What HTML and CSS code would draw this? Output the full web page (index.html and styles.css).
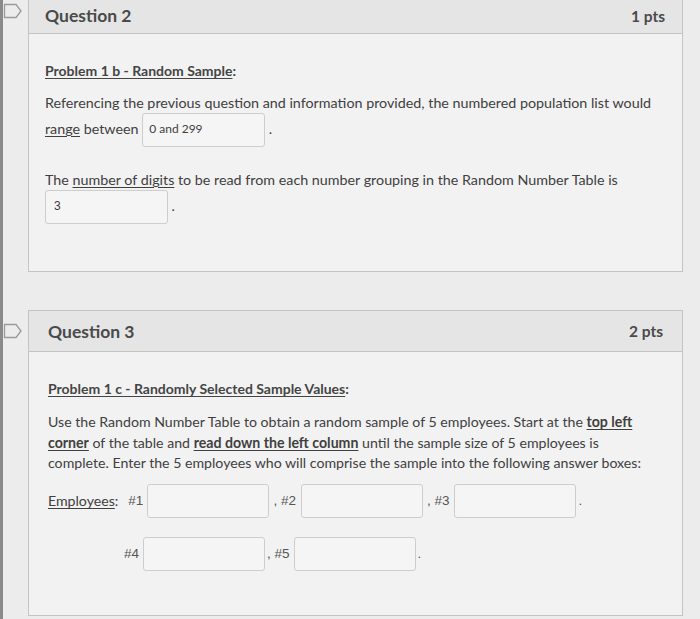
FILE: index.html
```html
<!DOCTYPE html>
<html>
<head>
<meta charset="utf-8">
<link rel="stylesheet" href="styles.css">
</head>
<body>
<div class="page">
  <div class="question q2">
    <div class="flag-col">
      <svg class="flag" width="20" height="16" viewBox="0 0 20 16"><path d="M1.5 1.5 H13 L18 8 L13 14.5 H1.5 Z" fill="none" stroke="#9a9a9a" stroke-width="1.3"/></svg>
    </div>
    <div class="card">
      <div class="card-head">
        <span class="q-title">Question 2</span>
        <span class="pts">1 pts</span>
      </div>
      <div class="card-body">
        <p class="prob"><u>Problem 1 b - Random Sample</u>:</p>
        <p class="para">Referencing the previous question and information provided, the numbered population list would<br><u>range</u> between <span class="inp wide">0 and 299</span> .</p>
        <p class="para digits">The <u>number of digits</u> to be read from each number grouping in the Random Number Table is</p>
        <p class="inp-line"><span class="inp wide num">3</span> .</p>
      </div>
    </div>
  </div>

  <div class="question q3">
    <div class="flag-col">
      <svg class="flag" width="20" height="16" viewBox="0 0 20 16"><path d="M1.5 1.5 H13 L18 8 L13 14.5 H1.5 Z" fill="none" stroke="#9a9a9a" stroke-width="1.3"/></svg>
    </div>
    <div class="card">
      <div class="card-head">
        <span class="q-title">Question 3</span>
        <span class="pts">2 pts</span>
      </div>
      <div class="card-body">
        <p class="prob"><u>Problem 1 c - Randomly Selected Sample Values</u>:</p>
        <p class="para tight">Use the Random Number Table to obtain a random sample of 5 employees. Start at the <b><u>top left</u></b><br><b><u>corner</u></b> of the table and <b><u>read down the left column</u></b> until the sample size of 5 employees is<br>complete. Enter the 5 employees who will comprise the sample into the following answer boxes:</p>
        <div class="emp-row">
          <span class="emp-label"><u>Employees</u>:</span>
          <span class="hash">#1</span>
          <span class="inp box"></span>
          <span class="hash sep">, #2</span>
          <span class="inp box"></span>
          <span class="hash sep">, #3</span>
          <span class="inp box"></span>
          <span class="hash">.</span>
        </div>
        <div class="emp-row second">
          <span class="hash">#4</span>
          <span class="inp box"></span>
          <span class="hash">, #5</span>
          <span class="inp box"></span>
          <span class="hash">.</span>
        </div>
      </div>
    </div>
  </div>
</div>
</body>
</html>
```
FILE: styles.css
```css
html, body {
  margin: 0;
  padding: 0;
}
body {
  background: #ececec;
  font-family: Lato, "Open Sans", sans-serif;
  color: #404040;
  height: 619px;
  overflow: hidden;
  border-left: 3px solid #8a8a8a;
  box-sizing: border-box;
}
.page {
  display: flex;
  flex-direction: column;
  gap: 38px;
  padding-right: 17px;
}
.question {
  display: flex;
}
.flag-col {
  width: 25px;
  flex: none;
}
.flag {
  display: block;
}
.q2 .flag { margin-top: 3px; }
.q3 .flag { margin-top: 13px; }
.card {
  flex: 1;
  border: 1px solid #c4c4c4;
  background: #f2f2f2;
}
.q2 .card {
  border-top: none;
  height: 272px;
  box-sizing: border-box;
}
.q3 .card {
  height: 306px;
  box-sizing: border-box;
}
.card-head {
  display: flex;
  justify-content: space-between;
  align-items: center;
  background: #e5e5e5;
  border-bottom: 1px solid #c4c4c4;
  padding: 0 17px 0 16px;
}
.q2 .card-head { height: 34px; padding-bottom: 2px; box-sizing: border-box; }
.q3 .card-head { height: 40px; padding-left: 19px; padding-right: 19px; }
.q-title {
  font-size: 17.5px;
  font-weight: 700;
  color: #4a4a4a;
}
.pts {
  font-size: 15.5px;
  font-weight: 700;
  color: #4a4a4a;
}
.card-body {
  padding: 0 16px;
}
.q3 .card-body { padding-left: 19px; }
p { margin: 0; }
.prob {
  font-size: 14px;
  font-weight: 700;
  line-height: 20px;
  margin-top: 27px;
  color: #454545;
}
u {
  text-decoration-thickness: 1px;
  text-underline-offset: 2px;
}
.para {
  font-size: 14.3px;
  line-height: 20px;
  margin-top: 12px;
}
.para.tight {
  font-size: 14.15px;
  margin-top: 13px;
  line-height: 20.5px;
}
.para.digits { margin-top: 23px; }
.inp {
  display: inline-block;
  vertical-align: middle;
  background: #f5f5f5;
  border: 1px solid #cdcdcd;
  border-radius: 3px;
  box-sizing: border-box;
  height: 34px;
  font-size: 12px;
  line-height: 30px;
  padding: 0 6px;
}
.wide { width: 123px; }
.num { padding-left: 8px; font-family: "Liberation Sans", Arial, sans-serif; }
.inp-line {
  font-size: 14px;
}
.emp-row {
  display: flex;
  align-items: center;
  margin-top: 10px;
  font-size: 14.15px;
  height: 34px;
}
.emp-row.second {
  margin-top: 19px;
  padding-left: 74px;
}
.emp-label {
  margin-right: 8px;
}
.hash {
  font-family: "Liberation Sans", Arial, sans-serif;
  font-size: 13.5px;
  color: #555;
  margin: 0 4px 0 2px;
}
.hash.sep {
  margin: 0 5px 0 4px;
}
.box { width: 122px; }
```
